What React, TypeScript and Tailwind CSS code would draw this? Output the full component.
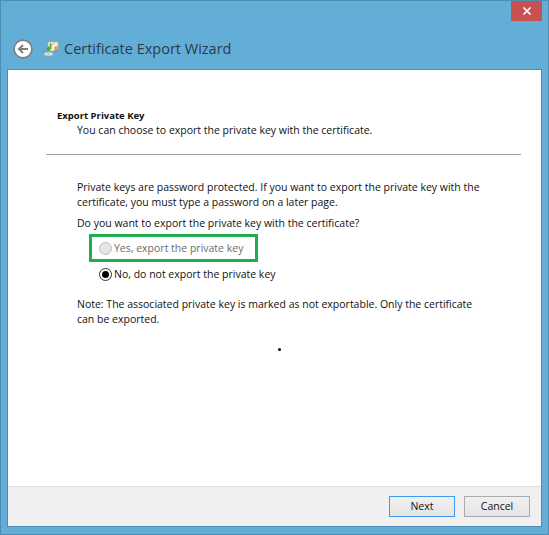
import { X } from 'lucide-react'

function WizardIcon() {
  return (
    <svg width="16" height="16" viewBox="0 0 16 16" className="shrink-0">
      <path d="M5 1h10v9H5z" fill="#f7f3e6" stroke="#b9a98c" strokeWidth="0.8" />
      <path d="M7 3h5M7 5h3" stroke="#c9b48c" strokeWidth="0.8" />
      <circle cx="13" cy="7" r="1.8" fill="#e89a1f" />
      <path d="M12 8.5v2.2M14 8.5v2.2" stroke="#2f6fc0" strokeWidth="1" />
      <path d="M7.5 2.5v5.5H4M4 8l2.2-2M4 8l2.2 2" fill="none" stroke="#3fae38" strokeWidth="1.7" />
      <ellipse cx="5.5" cy="13" rx="4.6" ry="2" fill="#e4e8ec" stroke="#8f9aa3" strokeWidth="0.6" />
      <ellipse cx="5.5" cy="13" rx="1.4" ry="0.6" fill="#9aa5ad" />
    </svg>
  )
}

function BackIcon() {
  return (
    <svg width="20" height="20" viewBox="0 0 20 20" className="shrink-0">
      <circle cx="10" cy="10" r="8.9" fill="#fff" stroke="#7d7d7d" strokeWidth="1.6" />
      <path d="M15 10H6.5M10 6l-4 4 4 4" fill="none" stroke="#7d7d7d" strokeWidth="2" />
    </svg>
  )
}

function Radio({ checked, disabled, label }: { checked?: boolean; disabled?: boolean; label: string }) {
  return (
    <div className={`flex items-center gap-[2px] ${disabled ? 'text-[#6d6d6d]' : 'text-[#111]'}`}>
      <span className={`w-[13px] h-[13px] rounded-full border flex items-center justify-center ${disabled ? 'border-[#bcbcbc] bg-[#e6e6e6]' : 'border-[#333] bg-white'}`}>
        {checked && <span className="w-[7px] h-[7px] rounded-full bg-black" />}
      </span>
      <span>{label}</span>
    </div>
  )
}

export default function App() {
  return (
    <div className="w-[549px] h-[535px] bg-[#62aed7] border border-[#4d8db5] flex flex-col font-['Open_Sans','Noto_Sans',sans-serif] text-[10.5px] leading-[15px]">
      <div className="flex justify-end pr-[6px] h-[20px]">
        <div className="w-[31px] h-[20px] bg-[#c75050] flex items-center justify-center">
          <X size={12} strokeWidth={3.5} className="text-white" />
        </div>
      </div>
      <div className="h-[48px] flex items-center pl-[12px] pt-[9px] gap-[12px]">
        <BackIcon />
        <div className="flex items-center gap-[5px] -ml-[2px]">
          <WizardIcon />
          <span className="text-[14.5px] text-[#2b3a47] leading-[20px]">Certificate Export Wizard</span>
        </div>
      </div>
      <div className="mx-[6px] mb-[7px] w-[535px] h-[459px] border border-[#4d8db5] flex flex-col">
        <div className="h-[416px] bg-white flex flex-col">
          <div className="pt-[38px] pl-[49px] text-[#111]">
            <div className="font-bold text-[9.5px]">Export Private Key</div>
            <div className="pl-[20px]">You can choose to export the private key with the certificate.</div>
          </div>
          <div className="ml-[38px] mr-[20px] mt-[16px] border-t border-[#a0a0a0]" />
          <div className="pl-[69px] pt-[25px] text-[#111]">
            <p className="w-[420px]">Private keys are password protected. If you want to export the private key with the certificate, you must type a password on a later page.</p>
            <p className="mt-[6px]">Do you want to export the private key with the certificate?</p>
            <div className="flex flex-col">
              <div className="w-[169px] h-[28px] border-[3px] border-[#1fae51] mt-[3px] ml-[12px] pl-[7px] pt-[1px] flex items-center">
                <Radio disabled label="Yes, export the private key" />
              </div>
              <div className="mt-[5px] ml-[22px]">
                <Radio checked label="No, do not export the private key" />
              </div>
            </div>
            <p className="mt-[15px] w-[405px]">Note: The associated private key is marked as not exportable. Only the certificate can be exported.</p>
          </div>
          <div className="ml-[270px] mt-[21px] w-[3px] h-[3px] rounded-full bg-black" />
        </div>
        <div className="flex-1 bg-[#f0f0f0] border-t border-[#dfdfdf] flex justify-end items-start pt-[9px] pr-[11px] gap-[9px]">
          <button className="w-[66px] h-[21px] border-[1.5px] border-[#3c9cf2] bg-gradient-to-b from-[#f0f0f0] to-[#e5e5e5] text-[#111] leading-none">Next</button>
          <button className="w-[66px] h-[21px] border-[1.5px] border-[#acacac] bg-gradient-to-b from-[#f0f0f0] to-[#e5e5e5] text-[#111] leading-none">Cancel</button>
        </div>
      </div>
    </div>
  )
}
